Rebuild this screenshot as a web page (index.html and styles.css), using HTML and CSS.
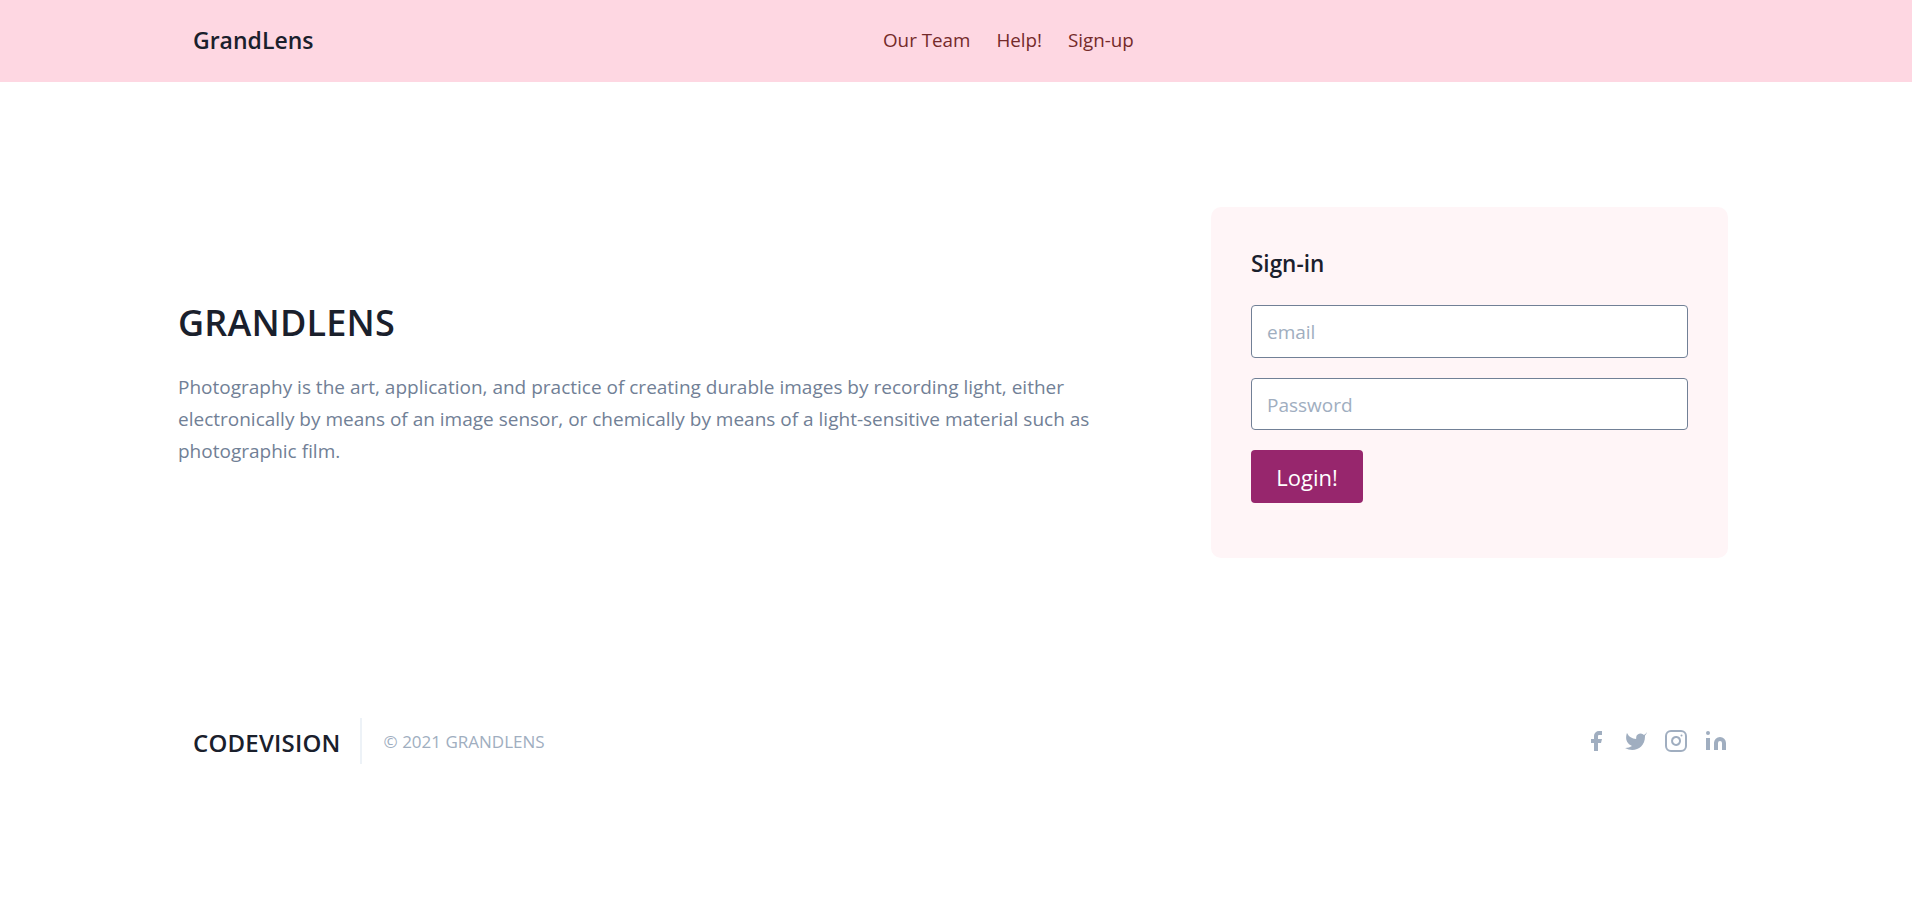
FILE: index.html
```html
<!DOCTYPE html>
<html lang="en">
<head>
  <meta charset="UTF-8">
  <meta name="viewport" content="width=device-width, initial-scale=1.0">
  <title>GrandLens</title>
  <link rel="stylesheet" href="styles.css">
</head>
<body>
  <header class="topbar">
    <a class="logo" href="#">GrandLens</a>
    <nav class="nav">
      <a href="#">Our Team</a>
      <a href="#">Help!</a>
      <a href="#">Sign-up</a>
    </nav>
  </header>

  <section class="hero">
    <div class="intro">
      <h1>GRANDLENS</h1>
      <p>Photography is the art, application, and practice of creating durable images by recording light, either electronically by means of an image sensor, or chemically by means of a light-sensitive material such as photographic film.</p>
    </div>
    <form class="card">
      <h2>Sign-in</h2>
      <input class="field" type="text" placeholder="email">
      <input class="field" type="password" placeholder="Password">
      <button class="btn" type="button">Login!</button>
    </form>
  </section>

  <footer class="foot">
    <a class="foot-logo" href="#">CODEVISION</a>
    <span class="copy">© 2021 GRANDLENS</span>
    <div class="social">
      <a href="#"><svg class="icon" viewBox="0 0 24 24"><path class="solid" d="M18 2h-3a5 5 0 00-5 5v3H7v4h3v8h4v-8h3l1-4h-4V7a1 1 0 011-1h3z"/></svg></a>
      <a href="#"><svg class="icon" viewBox="0 0 24 24"><path class="solid" d="M23 3a10.9 10.9 0 01-3 3 4.48 4.48 0 00-7.86 3v1A10.66 10.66 0 013 4s-4 9 5 13a11.64 11.64 0 01-7 2c9 5 20 0 20-11.5a4.5 4.5 0 00-.08-.83A7.72 7.72 0 0023 3z"/></svg></a>
      <a href="#"><svg class="icon" viewBox="0 0 24 24"><rect class="line" x="2" y="2" width="20" height="20" rx="5" ry="5"/><path class="line" d="M16 11.37A4 4 0 1112.63 8 4 4 0 0116 11.37zm1.5-4.87h.01"/></svg></a>
      <a href="#"><svg class="icon" viewBox="0 0 24 24"><path class="solid" d="M16 8a6 6 0 016 6v7h-4v-7a2 2 0 00-2-2 2 2 0 00-2 2v7h-4v-7a6 6 0 016-6zM2 9h4v12H2z"/><circle class="solid" cx="4" cy="4" r="2"/></svg></a>
    </div>
  </footer>
</body>
</html>
```

FILE: styles.css
```css
html,
body {
  height: 100%;
}

body {
  margin: 0;
  font: 16px "Open Sans", "Noto Sans", sans-serif;
  color: #718096;
  background: #fff;
}

a {
  color: inherit;
  text-decoration: none;
}

.topbar {
  display: flex;
  align-items: center;
  height: 82px;
  padding-left: 193px;
  background: #fed7e2;
}

.logo {
  width: 690px;
  margin-top: -2px;
  font-size: 23px;
  font-weight: 600;
  color: #1a202c;
}

.nav {
  display: flex;
  gap: 26px;
  margin-top: -2px;
  font-size: 18.8px;
  color: #742a2a;
}

.hero {
  display: flex;
  align-items: flex-start;
  justify-content: space-between;
  padding: 125px 184px 0 178px;
}

.intro {
  width: 925px;
  padding-top: 93px;
}

.intro h1 {
  margin: 0 0 25px;
  font-size: 36px;
  font-weight: 600;
  line-height: 46px;
  letter-spacing: 0.2px;
  color: #1a202c;
}

.intro p {
  margin: 0;
  font-size: 19px;
  line-height: 32px;
}

.card {
  display: flex;
  flex-direction: column;
  align-items: flex-start;
  box-sizing: border-box;
  width: 517px;
  height: 351px;
  padding: 40px;
  border-radius: 10px;
  background: #fff5f7;
}

.card h2 {
  margin: 0 0 24px;
  font-size: 22.5px;
  font-weight: 600;
  line-height: 34px;
  color: #1a202c;
}

.field {
  box-sizing: border-box;
  width: 100%;
  height: 52.5px;
  margin-bottom: 20px;
  padding: 2px 15px 0;
  border: 1px solid #718096;
  border-radius: 4px;
  background: #fff;
  font: 19px "Open Sans", "Noto Sans", sans-serif;
}

.field::placeholder {
  color: #a0aec0;
  opacity: 1;
}

.btn {
  height: 53px;
  width: 112px;
  border: 0;
  border-radius: 4px;
  background: #97266d;
  color: #fff;
  font: 22px "Open Sans", "Noto Sans", sans-serif;
}

.foot {
  display: flex;
  align-items: center;
  margin-top: 160px;
  padding: 0 184px 0 193px;
}

.foot-logo {
  padding: 3px 19px 0 0;
  font-size: 24px;
  font-weight: 600;
  letter-spacing: 0.2px;
  line-height: 43px;
  color: #1a202c;
  border-right: 2px solid #edf2f7;
}

.copy {
  margin-left: 22px;
  color: #a0aec0;
  font-size: 17px;
}

.social {
  display: flex;
  gap: 16px;
  margin-left: auto;
}

.social a {
  display: block;
  height: 24px;
}

.icon {
  width: 24px;
  height: 24px;
}

.solid {
  fill: #a0aec0;
  stroke: none;
}

.line {
  fill: none;
  stroke: #a0aec0;
  stroke-width: 2;
  stroke-linecap: round;
  stroke-linejoin: round;
}
```
